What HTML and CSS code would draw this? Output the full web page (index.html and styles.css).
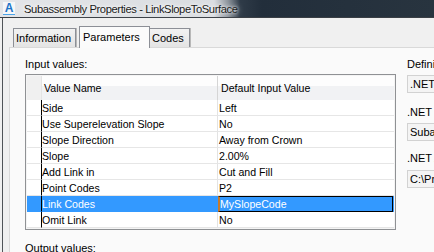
FILE: index.html
```html
<!DOCTYPE html>
<html>
<head>
<meta charset="utf-8">
<link rel="stylesheet" href="styles.css">
</head>
<body>
<div class="titlebar">
  <span class="appicon">A</span>
  <span class="title">Subassembly Properties - LinkSlopeToSurface</span>
</div>
<div class="frame">
  <div class="tabs">
    <div class="tab first">Information</div>
    <div class="tab active">Parameters</div>
    <div class="tab last">Codes</div>
  </div>
  <div class="panel">
    <div class="left">
      <div class="label">Input values:</div>
      <div class="grid">
        <div class="row head"><div class="rh"></div><div class="c1">Value Name</div><div class="c2">Default Input Value</div></div>
        <div class="row"><div class="rh"></div><div class="c1">Side</div><div class="c2">Left</div></div>
        <div class="row"><div class="rh"></div><div class="c1">Use Superelevation Slope</div><div class="c2">No</div></div>
        <div class="row"><div class="rh"></div><div class="c1">Slope Direction</div><div class="c2">Away from Crown</div></div>
        <div class="row"><div class="rh"></div><div class="c1">Slope</div><div class="c2">2.00%</div></div>
        <div class="row"><div class="rh"></div><div class="c1">Add Link in</div><div class="c2">Cut and Fill</div></div>
        <div class="row"><div class="rh"></div><div class="c1">Point Codes</div><div class="c2">P2</div></div>
        <div class="row sel"><div class="rh"></div><div class="c1">Link Codes</div><div class="c2">MySlopeCode</div></div>
        <div class="row"><div class="rh"></div><div class="c1">Omit Link</div><div class="c2">No</div></div>
      </div>
      <div class="label out">Output values:</div>
    </div>
    <div class="right">
      <div class="label">Definition:</div>
      <div class="box">.NET</div>
      <div class="label gap1">.NET Class Name:</div>
      <div class="box">Subassembly.LinkSlopeToSurface</div>
      <div class="label gap2">.NET Assembly:</div>
      <div class="box">C:\Program Files\Autodesk</div>
    </div>
  </div>
</div>
</body>
</html>
```
FILE: styles.css
```css
html, body {
  margin: 0;
  padding: 0;
}
body {
  width: 434px;
  height: 252px;
  overflow: hidden;
  background: #f0f0f0;
  font-family: "Liberation Sans", Arial, sans-serif;
  font-size: 11px;
  color: #000;
}
.titlebar {
  height: 17px;
  border-bottom: 1px solid #3a3f45;
  display: flex;
  align-items: center;
  background: linear-gradient(to right, #e3e5e8 0, #dadde1 214px, #8d949c 228px, #2f3b48 240px, #222e3b 262px, #28343f 100%);
}
.appicon {
  width: 12px;
  height: 13px;
  margin-left: 3px;
  background: #f4f6f8;
  color: #1a73c8;
  font-weight: bold;
  font-size: 12px;
  line-height: 12px;
  text-align: center;
  border-bottom: 1px solid #4aa3e8;
  box-sizing: border-box;
}
.title {
  margin-left: 9px;
  font-size: 11.2px;
  letter-spacing: -0.4px;
  color: #1a1a1a;
  text-shadow: 0 0 6px #fff, 0 0 3px #fff;
}
.frame {
  margin-left: 2px;
  border-left: 1px solid #505458;
  padding-left: 6px;
  height: 234px;
}
.tabs {
  display: flex;
  align-items: flex-end;
  padding-top: 8px;
  padding-left: 4px;
  height: 21px;
}
.tab {
  height: 18px;
  line-height: 18px;
  border: 1px solid #8c8f96;
  border-bottom: none;
  background: linear-gradient(#f2f2f2, #e4e4e4);
  padding-left: 2px;
  box-sizing: content-box;
}
.tab.first {
  width: 59px;
  margin-right: 3px;
  box-shadow: 1px 0 0 #b8b8b8;
}
.tab.active {
  width: 66px;
  height: 21px;
  line-height: 20px;
  padding-left: 3px;
  background: #fbfbfb;
  margin-bottom: -1px;
  position: relative;
  z-index: 1;
}
.tab.last {
  width: 37px;
  border-left: none;
  box-shadow: 1px 0 0 #b8b8b8;
}
.panel {
  border: 1px solid #d9d9d9;
  border-right: none;
  background: #fafafa;
  display: flex;
  padding: 9px 0 0 15px;
  height: 220px;
}
.label {
  line-height: 14px;
  height: 14px;
  white-space: nowrap;
}
.left .label {
  margin-bottom: 3px;
}
.left .label.out {
  margin-top: 11px;
}
.grid {
  border: 1px solid #8f9194;
  padding: 1px;
  background: #f4f4f4;
  box-sizing: content-box;
  width: 367px;
  font-size: 10.6px;
}
.row {
  display: flex;
  height: 16px;
  background: #fff;
}
.row .rh {
  width: 14px;
  flex: none;
  border-bottom: 1px solid #e6e6e6;
}
.row .c1 {
  width: 175px;
  flex: none;
  border-left: 1px solid #000;
  border-right: 1px solid #e3e3e3;
  border-bottom: 1px solid #e6e6e6;
  line-height: 16px;
  padding-left: 0;
  white-space: nowrap;
}
.row .c2 {
  flex: 1;
  border-bottom: 1px solid #e6e6e6;
  line-height: 16px;
  padding-left: 1px;
  white-space: nowrap;
}
.row.head {
  height: 24px;
  background: linear-gradient(#fdfdfd 0, #fdfdfd 40%, #f1f2f4 41%, #f1f2f4 100%);
}
.row.head .rh {
  background: #f0f0f0;
  border-bottom: none;
}
.row.head .c1 {
  border-left: 1px solid #e4e4e4;
  border-right: 1px solid #d5d5d5;
  border-bottom: none;
  line-height: 24px;
  padding-left: 2px;
  width: 173px;
}
.row.head .c2 {
  border-bottom: none;
  line-height: 24px;
  padding-left: 3px;
}
.row.sel {
  background: #3399ff;
  color: #fff;
}
.row.sel .rh,
.row.sel .c1 {
  border-bottom-color: #3399ff;
}
.row.sel .c1 {
  border-right-color: #3399ff;
}
.row.sel .c2 {
  border: 1px solid #000;
  border-left: 2px solid #c57a2c;
  line-height: 14px;
  margin-right: 1px;
  padding-left: 0;
}
.right {
  margin-left: 11px;
  width: 200px;
  flex: none;
}
.box {
  margin-top: 4px;
  height: 16px;
  line-height: 16px;
  border: 1px solid #d2d2d2;
  background: #f4f4f4;
  padding-left: 2px;
  white-space: nowrap;
}
.right .gap1 {
  margin-top: 12px;
}
.right .gap2 {
  margin-top: 10px;
}
.right .gap2 + .box {
  margin-top: 5px;
}
```
